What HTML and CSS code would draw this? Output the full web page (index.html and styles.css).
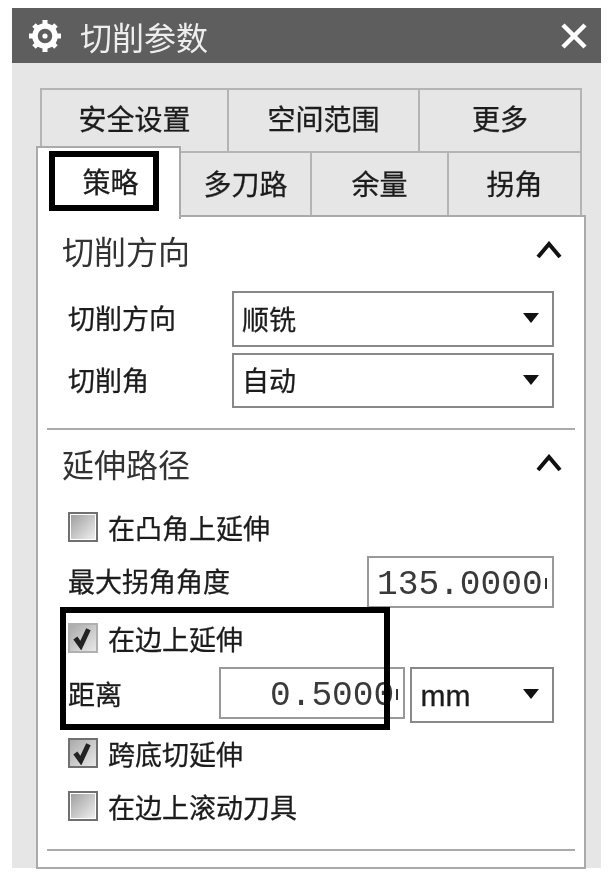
FILE: index.html
```html
<!DOCTYPE html>
<html lang="zh-CN">
<head>
    <meta charset="UTF-8">
    <title>切削参数</title>
    <link rel="stylesheet" href="styles.css">
</head>
<body>
    <div class="window">
        <div class="title-bar">
            <svg class="gear" viewBox="0 0 32 32">
                <circle cx="16" cy="16" r="10" fill="none" stroke="#fff" stroke-width="5.5"/>
                <circle cx="16" cy="16" r="2.6" fill="#fff"/>
                <path d="M16 0v5M16 27v5M0 16h5M27 16h5M5 5l3.5 3.5M23.5 23.5L27 27M27 5l-3.5 3.5M8.500 23.500L5 27" stroke="#fff" stroke-width="5" fill="none"/>
            </svg>
            <span class="title-text">切削参数</span>
            <svg class="close" viewBox="0 0 26 26">
                <path d="M2 2l22 22M24 2L2 24" stroke="#fff" stroke-width="4.5" fill="none"/>
            </svg>
        </div>
        <div class="content">
            <div class="tab-row first">
                <div class="tab w189">安全设置</div>
                <div class="tab w191">空间范围</div>
                <div class="tab w162">更多</div>
            </div>
            <div class="tab-row second">
                <div class="tab active"><span class="mark"></span>策略</div>
                <div class="tab w131">多刀路</div>
                <div class="tab w137">余量</div>
                <div class="tab w133">拐角</div>
            </div>
            <div class="panel">
                <div class="section-head">
                    <span>切削方向</span>
                    <svg class="chevron" viewBox="0 0 26 18"><path d="M2 16L13 3l11 13" stroke="#111" stroke-width="4" fill="none"/></svg>
                </div>
                <div class="rows">
                    <div class="field first-field">
                        <label class="label">切削方向</label>
                        <div class="select grow"><span>顺铣</span><i class="arrow"></i></div>
                    </div>
                    <div class="field second-field">
                        <label class="label">切削角</label>
                        <div class="select grow"><span>自动</span><i class="arrow"></i></div>
                    </div>
                </div>
                <div class="separator sep-one"></div>
                <div class="section-head">
                    <span>延伸路径</span>
                    <svg class="chevron" viewBox="0 0 26 18"><path d="M2 16L13 3l11 13" stroke="#111" stroke-width="4" fill="none"/></svg>
                </div>
                <div class="rows">
                    <div class="check-row"><span class="box"></span>在凸角上延伸</div>
                    <div class="field angle-field">
                        <label class="label">最大拐角角度</label>
                        <div class="number angle">135.0000<i class="stub"></i></div>
                    </div>
                    <div class="highlighted">
                        <span class="mark-wide"></span>
                        <div class="check-row edge-row">
                            <span class="box on faint">
                                <svg viewBox="0 0 22 22"><path d="M4 11l5 7 7-15" stroke="#222" stroke-width="4.500" fill="none"/></svg>
                            </span>在边上延伸
                        </div>
                        <div class="field distance-field">
                            <label class="label short">距离</label>
                            <div class="number distance">0.5000<i class="stub"></i></div>
                            <div class="select unit"><span class="unit-text">mm</span><i class="arrow"></i></div>
                        </div>
                    </div>
                    <div class="check-row under-row">
                        <span class="box on">
                            <svg viewBox="0 0 22 22"><path d="M4 11l5 7 7-15" stroke="#222" stroke-width="4.500" fill="none"/></svg>
                        </span>跨底切延伸
                    </div>
                    <div class="check-row roll-row"><span class="box"></span>在边上滚动刀具</div>
                </div>
                <div class="separator sep-two"></div>
            </div>
        </div>
    </div>
</body>
</html>
```

FILE: styles.css
```css
* {
    box-sizing: border-box;
}
body {
    margin: 0;
    width: 612px;
    height: 877px;
    overflow: hidden;
    background: #fff;
    font-family: "Noto Sans CJK SC", "Liberation Sans", sans-serif;
    font-size: 27px;
    color: #1c1c1c;
    -webkit-text-stroke: 0.3px #1c1c1c;
}
.window {
    width: 589px;
    height: 860px;
    margin: 8px 0 0 12px;
    background: #e6e6e6;
    filter: blur(0.6px);
}
.title-bar {
    display: flex;
    align-items: center;
    height: 55px;
    padding: 0 14px 0 17px;
    background: #5e5e5e;
    color: #eee;
}
.gear {
    width: 32px;
    height: 32px;
}
.title-text {
    margin-left: 19px;
    font-size: 32px;
    flex: 1;
    -webkit-text-stroke: 0;
}
.close {
    width: 26px;
    height: 26px;
}
.content {
    padding: 25px 0 0 24px;
}
.tab-row {
    display: flex;
    margin-left: 4px;
}
.tab-row.first {
    height: 64px;
}
.tab-row.second {
    height: 63px;
    margin-left: 0;
}
.tab {
    display: flex;
    align-items: center;
    justify-content: center;
    height: 100%;
    border: 2px solid #b4b4b4;
    border-left-width: 0;
    font-size: 28px;
}
.first .tab:first-child {
    border-left-width: 2px;
}
.first .tab {
    border-bottom-width: 1px;
    padding-bottom: 5px;
}
.second .tab {
    border-top-width: 1px;
    border-bottom: 0;
    padding-bottom: 2px;
}
.w189 { width: 189px; }
.w191 { width: 191px; }
.w162 { width: 162px; }
.w131 { width: 131px; }
.w137 { width: 137px; }
.w133 { width: 133px; }
.tab-row .tab.active {
    position: relative;
    z-index: 2;
    width: 145px;
    height: 73px;
    margin-top: -6px;
    padding: 0 0 6px 4px;
    background: #fff;
    border: 2px solid #aaa;
    border-bottom: 0;
}
.mark {
    position: absolute;
    left: 11px;
    top: 3px;
    width: 110px;
    height: 60px;
    border: 6px solid #000;
}
.panel {
    position: relative;
    width: 550px;
    height: 654px;
    background: #fff;
    border: 2px solid #aaa;
}
.section-head {
    display: flex;
    align-items: center;
    justify-content: space-between;
    height: 70px;
    padding: 0 22px 5px 24px;
    font-size: 32px;
    color: #333;
    -webkit-text-stroke: 0;
}
.chevron {
    width: 26px;
    height: 18px;
}
.rows {
    padding: 0 30px;
}
.field {
    display: flex;
    align-items: center;
}
.label {
    width: 164px;
    flex: none;
    padding-bottom: 3px;
}
.first-field {
    height: 56px;
    margin-top: 4px;
}
.second-field {
    height: 55px;
    margin-top: 6px;
}
.select {
    display: flex;
    align-items: center;
    justify-content: space-between;
    height: 100%;
    padding: 0 13px 2px 8px;
    border: 2px solid #888;
}
.grow {
    flex: 1;
}
.arrow {
    width: 0;
    height: 0;
    border-left: 8px solid transparent;
    border-right: 8px solid transparent;
    border-top: 10px solid #111;
}
.separator {
    height: 2px;
    margin: 0 9px;
    background: #aaa;
}
.sep-one {
    margin-top: 20px;
}
.sep-two {
    margin-top: 28px;
}
.check-row {
    display: flex;
    align-items: center;
    height: 30px;
    margin-top: 12px;
}
.box {
    display: flex;
    flex: none;
    width: 30px;
    height: 30px;
    margin-right: 10px;
    padding: 1px;
    border: 2px solid #707070;
    background: linear-gradient(135deg, #9c9c9c, #f2f2f2);
    background-clip: content-box;
}
.box svg {
    width: 100%;
    height: 100%;
}
.box.on {
    background: linear-gradient(135deg, #aaa, #e8e8e8);
}
.box.faint {
    border-color: #b0b0b0;
}
.angle-field {
    justify-content: space-between;
    height: 52px;
    margin-top: 14px;
}
.number {
    height: 100%;
    overflow: hidden;
    white-space: nowrap;
    border: 2px solid #999;
    font-family: "Liberation Mono", monospace;
    font-size: 34.500px;
    line-height: 53px;
    color: #3a3a3a;
    -webkit-text-stroke: 0;
}
.stub {
    display: inline-block;
    width: 2px;
    height: 11px;
    margin-left: 2px;
    vertical-align: 5px;
    background: #333;
}
.angle {
    width: 187px;
    padding-left: 8px;
}
.highlighted {
    position: relative;
}
.mark-wide {
    position: absolute;
    z-index: 2;
    left: -8px;
    top: -16px;
    width: 330px;
    height: 123px;
    border: 6px solid #000;
}
.edge-row {
    margin-top: 15px;
}
.distance-field {
    height: 56px;
    margin-top: 14px;
}
.short {
    width: 151px;
}
.distance {
    width: 187px;
    height: 52px;
    align-self: flex-start;
    padding-left: 49px;
}
.unit {
    width: 144px;
    margin-left: 5px;
    font-family: "Liberation Sans", sans-serif;
    font-size: 30px;
}
.unit-text {
    padding-top: 3px;
}
.under-row {
    margin-top: 15px;
}
.roll-row {
    margin-top: 23px;
}
```
